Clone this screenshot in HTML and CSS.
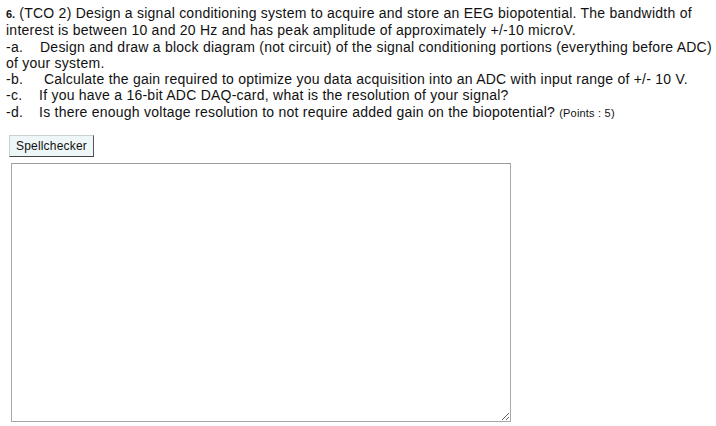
FILE: index.html
```html
<!DOCTYPE html>
<html>
<head>
<meta charset="utf-8">
<link rel="stylesheet" href="styles.css">
</head>
<body>
<div class="question">
  <div class="text"><span class="num">6.</span> (TCO 2) Design a signal conditioning system to acquire and store an EEG biopotential. The bandwidth of interest is between 10 and 20 Hz and has peak amplitude of approximately +/-10 microV.</div>
  <div class="text"><span class="lbl">-a.</span>Design and draw a block diagram (not circuit) of the signal conditioning portions (everything before ADC) of your system.</div>
  <div class="text"><span class="lbl lbl-b">-b.</span>Calculate the gain required to optimize you data acquisition into an ADC with input range of +/- 10 V.</div>
  <div class="text"><span class="lbl lbl-c">-c.</span>If you have a 16-bit ADC DAQ-card, what is the resolution of your signal?</div>
  <div class="text"><span class="lbl lbl-c">-d.</span>Is there enough voltage resolution to not require added gain on the biopotential? <span class="points">(Points : 5)</span></div>
</div>
<div class="actions">
  <button class="spell">Spellchecker</button>
</div>
<div class="answer">
  <textarea class="box"></textarea>
</div>
</body>
</html>
```
FILE: styles.css
```css
html, body {
  margin: 0;
  padding: 0;
  background: #ffffff;
}
body {
  font-family: "Liberation Sans", Arial, sans-serif;
  color: #111111;
}
.question {
  padding: 5px 0 0 6px;
  font-size: 14px;
  line-height: 16.3px;
  letter-spacing: 0.24px;
}
.num {
  font-weight: bold;
  font-size: 11px;
  letter-spacing: 0;
}
.lbl {
  display: inline-block;
  width: 34px;
}
.lbl-b {
  width: 38px;
}
.lbl-c {
  width: 33px;
}
.points {
  font-size: 11px;
  letter-spacing: 0.2px;
}
.actions {
  padding: 14px 0 0 9px;
  height: 22px;
}
.spell {
  box-sizing: border-box;
  width: 85px;
  height: 22px;
  margin: 0;
  padding: 0;
  font-family: "Liberation Sans", Arial, sans-serif;
  font-size: 12px;
  letter-spacing: 0.2px;
  color: #111;
  background: #eef6f7;
  border: 1px solid;
  border-color: #c8d0d2 #555 #444 #c8d0d2;
  border-radius: 0;
}
.answer {
  padding: 6px 0 0 11px;
}
.box {
  display: block;
  box-sizing: border-box;
  width: 500px;
  height: 259px;
  margin: 0;
  border: 1px solid #a8a8a8;
  border-top-color: #9c9c9c;
  background: #fff;
  resize: both;
}
```
